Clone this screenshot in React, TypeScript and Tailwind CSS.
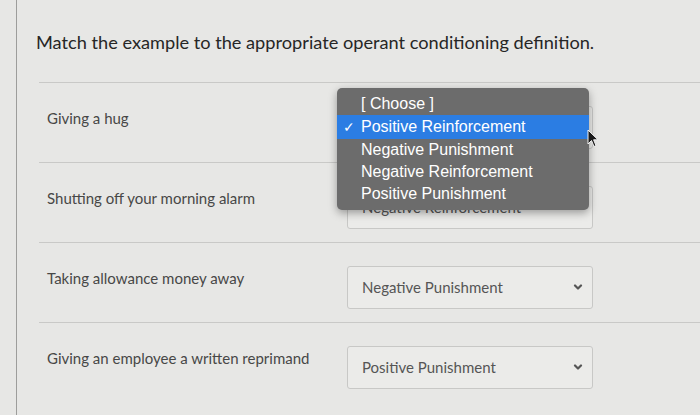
import React from 'react';

const rows = [
  { label: 'Giving a hug', value: 'Positive Reinforcement' },
  { label: 'Shutting off your morning alarm', value: 'Negative Reinforcement' },
  { label: 'Taking allowance money away', value: 'Negative Punishment' },
  { label: 'Giving an employee a written reprimand', value: 'Positive Punishment' },
];

const options = ['[ Choose ]', 'Positive Reinforcement', 'Negative Punishment', 'Negative Reinforcement', 'Positive Punishment'];

function Chevron() {
  return (
    <svg width="10" height="7" viewBox="0 0 10 7" className="flex-shrink-0">
      <path d="M2 1.5 L5 4.5 L8 1.5" fill="none" stroke="#555555" strokeWidth="2.2" strokeLinecap="round" strokeLinejoin="round" />
    </svg>
  );
}

function SelectBox({ value }: { value: string }) {
  return (
    <div className="h-[43px] w-[246px] flex items-center justify-between pl-[14px] pr-[9px] rounded-[3px] border border-[#c8c8c6] bg-[#ebebe9] text-[15px] text-[#555555]">
      <span>{value}</span>
      <Chevron />
    </div>
  );
}

export default function App() {
  return (
    <div className="relative w-[700px] h-[415px] overflow-hidden bg-[#e7e7e5] font-['Lato',sans-serif]">
      <div className="ml-[16px] h-full border-l border-[#9d9d9b] pl-[22px] pt-[31px]">
        {/* Question */}
        <h1 className="text-[18.2px] leading-[22px] text-[#262626] -ml-[3px]">
          Match the example to the appropriate operant conditioning definition.
        </h1>

        {/* Answer rows */}
        <div className="mt-[29px]">
          {rows.map((row) => (
            <div key={row.label} className="h-[80px] border-t border-[#c9c9c7] grid grid-cols-[308px_246px] items-start pt-[23px]">
              <span className="pl-[8px] mt-[2px] text-[15px] leading-[20px] text-[#474747]">{row.label}</span>
              <SelectBox value={row.value} />
            </div>
          ))}
        </div>
      </div>

      {/* Open dropdown menu */}
      <div className="absolute left-[337px] top-[88px] w-[252px] rounded-[5px] bg-[#6c6c6c] pt-[5px] pb-[5px] shadow-[0_3px_8px_rgba(0,0,0,0.35)] font-['Liberation_Sans',Arial,sans-serif] text-[16px] font-medium text-white">
        {options.map((opt, i) => (
          <div
            key={opt}
            className={`relative flex items-center pl-[24px] ${i === 1 ? 'h-[24px] bg-[#2b7de3]' : 'h-[22px]'}`}
          >
            {i === 1 && <span className="absolute left-[6px] text-[14px]">✓</span>}
            {opt}
          </div>
        ))}
      </div>

      {/* Mouse pointer */}
      <svg className="absolute left-[587px] top-[129px]" width="12" height="19" viewBox="0 0 12 19">
        <path d="M1 1 L1 15 L4.5 11.5 L7 17.5 L9 16.6 L6.6 10.8 L11 10.8 Z" fill="#1a1a1a" stroke="#f2f2f2" strokeWidth="1" />
      </svg>
    </div>
  );
}
